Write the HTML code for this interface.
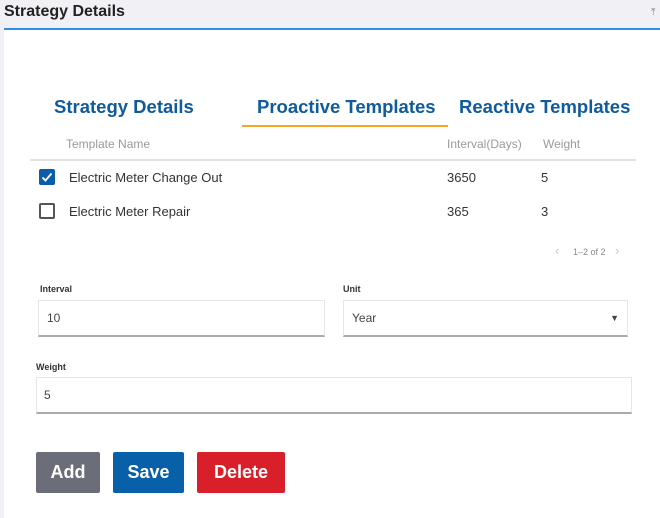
<!DOCTYPE html>
<html><head><style>
body{margin:0;width:660px;height:518px;background:#f1f1f5;font-family:"Liberation Sans",sans-serif;position:relative;overflow:hidden}
.a{position:absolute;white-space:nowrap}
.panel{position:absolute;left:4px;top:30px;width:656px;height:488px;background:#fff}
.tab{font-weight:bold;font-size:18.5px;color:#0f5b9c;top:96px}
.hd{font-size:12px;color:#9a9a9a;top:137px}
.td{font-size:13px;color:#333}
.lbl{font-size:9px;font-weight:bold;color:#333}
.inp{position:absolute;background:#fff;border:1px solid #e6e6e6;border-bottom:2px solid #aaa;box-sizing:border-box;font-size:12px;color:#444;padding-left:8px}
.btn{position:absolute;top:452px;height:41px;color:#fff;font-weight:bold;font-size:18px;text-align:center;line-height:41px;border-radius:2px}
</style></head><body>
<div class="a" style="left:4px;top:3px;font-size:16px;font-weight:bold;color:#222">Strategy Details</div>
<div class="a" style="left:651px;top:7px;font-size:10px;color:#888">⤒</div>
<div class="a" style="left:4px;top:28px;width:656px;height:2px;background:#2f8fe6"></div>
<div class="panel"></div>
<div class="a tab" style="left:54px">Strategy Details</div>
<div class="a tab" style="left:257px">Proactive Templates</div>
<div class="a tab" style="left:459px">Reactive Templates</div>
<div class="a" style="left:242px;top:125px;width:206px;height:2px;background:#f5a623"></div>
<div class="a hd" style="left:66px">Template Name</div>
<div class="a hd" style="left:447px">Interval(Days)</div>
<div class="a hd" style="left:543px">Weight</div>
<div class="a" style="left:30px;top:159px;width:606px;height:2px;background:#e2e2e2"></div>
<div class="a" style="left:39px;top:169px;width:16px;height:16px;background:#0a5ea8;border-radius:2px"><svg width="16" height="16"><path d="M3.5 8.5 L6.5 11.5 L12.5 4.5" stroke="#fff" stroke-width="1.8" fill="none"/></svg></div>
<div class="a td" style="left:69px;top:170px">Electric Meter Change Out</div>
<div class="a td" style="left:447px;top:170px">3650</div>
<div class="a td" style="left:541px;top:170px">5</div>
<div class="a" style="left:39px;top:203px;width:12px;height:12px;border:2px solid #555;border-radius:2px"></div>
<div class="a td" style="left:69px;top:204px">Electric Meter Repair</div>
<div class="a td" style="left:447px;top:204px">365</div>
<div class="a td" style="left:541px;top:204px">3</div>
<div class="a" style="left:555px;top:243px;font-size:13px;color:#ccc">‹</div>
<div class="a" style="left:573px;top:247px;font-size:9px;color:#888">1–2 of 2</div>
<div class="a" style="left:615px;top:243px;font-size:13px;color:#ccc">›</div>
<div class="a lbl" style="left:40px;top:284px">Interval</div>
<div class="inp" style="left:38px;top:300px;width:287px;height:37px;line-height:35px">10</div>
<div class="a lbl" style="left:343px;top:284px">Unit</div>
<div class="inp" style="left:343px;top:300px;width:285px;height:37px;line-height:35px">Year<span style="position:absolute;right:8px;top:0;font-size:9px;color:#444">▼</span></div>
<div class="a lbl" style="left:36px;top:362px">Weight</div>
<div class="inp" style="left:36px;top:377px;width:596px;height:37px;line-height:35px;padding-left:7px">5</div>
<div class="btn" style="left:36px;width:64px;background:#6b6e78">Add</div>
<div class="btn" style="left:113px;width:71px;background:#0860a8">Save</div>
<div class="btn" style="left:197px;width:88px;background:#d9202a">Delete</div>
</body></html>
